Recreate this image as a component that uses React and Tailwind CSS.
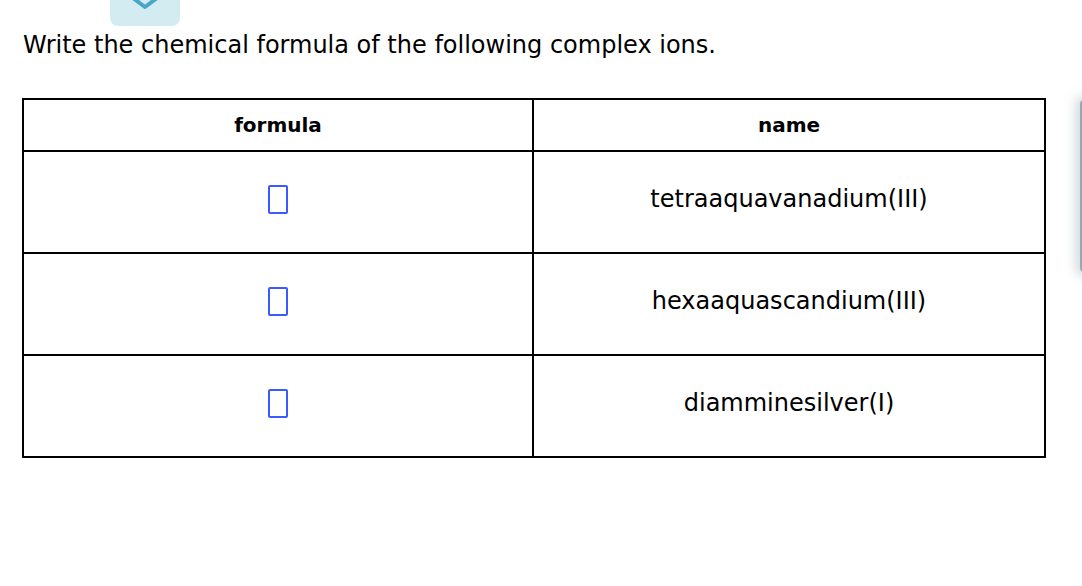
export default function App() {
  const rows = ["tetraaquavanadium(III)", "hexaaquascandium(III)", "diamminesilver(I)"];
  return (
    <div className="relative w-[1082px] h-[586px] overflow-hidden bg-white" style={{ fontFamily: '"DejaVu Sans", Verdana, sans-serif' }}>
      <div className="absolute left-[110px] top-0 w-[70px] h-[26px] rounded-b-[8px] bg-[#d3ecf2] flex justify-center">
        <svg width="30" height="12" viewBox="0 0 30 12" className="-mt-[3px]">
          <polyline points="3,1 15,10 27,1" fill="none" stroke="#4aa6c6" strokeWidth="4" strokeLinecap="round" strokeLinejoin="round" />
        </svg>
      </div>
      <div className="absolute right-[-6px] top-[100px] w-[8px] h-[172px] rounded-l-[4px] bg-[#98a8b2] shadow-[0_0_12px_4px_rgba(120,140,155,0.35)]" />
      <div className="pt-[29px] pl-[23px]">
        <p className="text-[24px] leading-[32px] text-black">Write the chemical formula of the following complex ions.</p>
      </div>
      <div className="ml-[22px] mt-[37px] w-[1024px] border-2 border-black">
        <div className="grid grid-cols-[508px_2px_1fr] h-[50px] items-center">
          <div className="text-center font-bold text-[20px]">formula</div>
          <div className="h-full bg-black" />
          <div className="text-center font-bold text-[20px]">name</div>
        </div>
        {rows.map((r) => (
          <div key={r} className="grid grid-cols-[508px_2px_1fr] h-[102px] items-center border-t-2 border-black">
            <div className="flex justify-center">
              <div className="w-[20px] h-[29px] border-2 border-[#3a5cff] rounded-[2px] -mt-[5px]" />
            </div>
            <div className="h-full bg-black" />
            <div className="text-center text-[24px] -mt-[6px]">{r}</div>
          </div>
        ))}
      </div>
    </div>
  );
}
